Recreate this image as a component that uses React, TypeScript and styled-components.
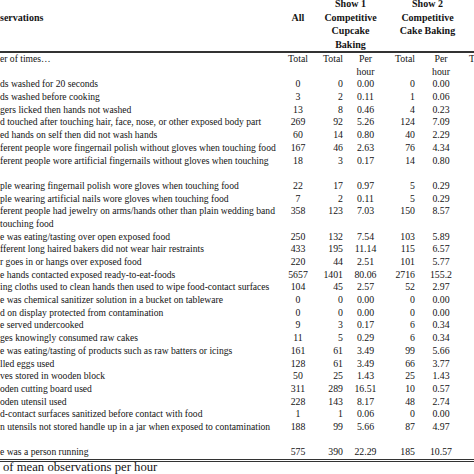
import React from "react";
import styled, { createGlobalStyle } from "styled-components";

const Global = createGlobalStyle`
  html, body { margin: 0; padding: 0; background: #ffffff; }
  body { width: 474px; height: 474px; overflow: hidden; }
`;

const COLS = "283px 30px 30px 45px 27px 52px 7px";
const HEAD_LH = 13.5;
const ROW_H = 12.7;

const Page = styled.div`
  width: 474px;
  height: 474px;
  overflow: hidden;
  font-family: "Liberation Serif", "Times New Roman", serif;
  color: #141414;
  background: #fff;
`;

const Table = styled.div`
  margin-top: -3px;
`;

const Head = styled.div`
  display: grid;
  grid-template-columns: ${COLS};
  height: ${HEAD_LH * 4}px;
  border-bottom: 2px solid #333;
  font-weight: bold;
  font-size: 10px;
  line-height: ${HEAD_LH}px;
`;

const HeadCell = styled.div<{ $skip?: number; $span?: number; $align?: string }>`
  padding-top: ${(p) => (p.$skip ?? 0) * HEAD_LH}px;
  grid-column: span ${(p) => p.$span ?? 1};
  text-align: ${(p) => p.$align ?? "center"};
  white-space: nowrap;
`;

const Body = styled.div`
  border-bottom: 3px double #333;
  font-size: 9.8px;
`;

const Row = styled.div`
  display: grid;
  grid-template-columns: ${COLS};
  height: ${ROW_H}px;
  line-height: ${ROW_H}px;
`;

const Desc = styled.div`
  white-space: nowrap;
  overflow: visible;
  font-size: 9.6px;
`;

const Num = styled.div<{ $align: "left" | "right" | "center"; $pad?: number }>`
  text-align: ${(p) => p.$align};
  padding-left: ${(p) => p.$pad ?? 0}px;
  white-space: nowrap;
`;

const Caption = styled.div`
  font-size: 12.7px;
  line-height: 12px;
  margin-top: -1px;
  padding-left: 3px;
  white-space: nowrap;
`;

type R = [string, string?, string?, string?, string?, string?];

const rows: R[] = [
  ["ds washed for 20 seconds", "0", "0", "0.00", "0", "0.00"],
  ["ds washed before cooking", "3", "2", "0.11", "1", "0.06"],
  ["gers licked then hands not washed", "13", "8", "0.46", "4", "0.23"],
  ["d touched after touching hair, face, nose, or other exposed body part", "269", "92", "5.26", "124", "7.09"],
  ["ed hands on self then did not wash hands", "60", "14", "0.80", "40", "2.29"],
  ["ferent people wore fingernail polish without gloves when touching food", "167", "46", "2.63", "76", "4.34"],
  ["ferent people wore artificial fingernails without gloves when touching", "18", "3", "0.17", "14", "0.80"],
  [""],
  ["ple wearing fingernail polish wore gloves when touching food", "22", "17", "0.97", "5", "0.29"],
  ["ple wearing artificial nails wore gloves when touching food", "7", "2", "0.11", "5", "0.29"],
  ["ferent people had jewelry on arms/hands other than plain wedding band", "358", "123", "7.03", "150", "8.57"],
  ["touching food"],
  ["e was eating/tasting over open exposed food", "250", "132", "7.54", "103", "5.89"],
  ["fferent long haired bakers did not wear hair restraints", "433", "195", "11.14", "115", "6.57"],
  ["r goes in or hangs over exposed food", "220", "44", "2.51", "101", "5.77"],
  ["e hands contacted exposed ready-to-eat-foods", "5657", "1401", "80.06", "2716", "155.2"],
  [" ing cloths used to clean hands then used to wipe food-contact surfaces", "104", "45", "2.57", "52", "2.97"],
  ["e was chemical sanitizer solution in a bucket on tableware", "0", "0", "0.00", "0", "0.00"],
  ["d on display protected from contamination", "0", "0", "0.00", "0", "0.00"],
  ["e served undercooked", "9", "3", "0.17", "6", "0.34"],
  ["ges knowingly consumed raw cakes", "11", "5", "0.29", "6", "0.34"],
  ["e was eating/tasting of products such as raw batters or icings", "161", "61", "3.49", "99", "5.66"],
  ["lled eggs used", "128", "61", "3.49", "66", "3.77"],
  ["ves stored in wooden block", "50", "25", "1.43", "25", "1.43"],
  ["oden cutting board used", "311", "289", "16.51", "10", "0.57"],
  ["oden utensil used", "228", "143", "8.17", "48", "2.74"],
  ["d-contact surfaces sanitized before contact with food", "1", "1", "0.06", "0", "0.00"],
  ["n utensils not stored handle up in a jar when exposed to contamination", "188", "99", "5.66", "87", "4.97"],
  [""],
  ["e was a person running", "575", "390", "22.29", "185", "10.57"],
];

const DataRow: React.FC<{ r: R }> = ({ r }) => (
  <Row>
    <Desc>{r[0]}</Desc>
    <Num $align="center">{r[1] ?? ""}</Num>
    <Num $align="right">{r[2] ?? ""}</Num>
    <Num $align="center">{r[3] ?? ""}</Num>
    <Num $align="right">{r[4] ?? ""}</Num>
    <Num $align="center">{r[5] ?? ""}</Num>
    <Num $align="left" />
  </Row>
);

export default function App() {
  return (
    <Page>
      <Global />
      <Table>
        <Head>
          <HeadCell $skip={1} $align="left">servations</HeadCell>
          <HeadCell $skip={1}>All</HeadCell>
          <HeadCell $span={2}>
            Show 1
            <br />
            Competitive
            <br />
            Cupcake
            <br />
            Baking
          </HeadCell>
          <HeadCell $span={2}>
            Show 2
            <br />
            Competitive
            <br />
            Cake Baking
          </HeadCell>
          <HeadCell />
        </Head>
        <Body>
          <Row>
            <Desc>er of times…</Desc>
            <Num $align="center">Total</Num>
            <Num $align="right">Total</Num>
            <Num $align="center">Per</Num>
            <Num $align="right">Total</Num>
            <Num $align="center">Per</Num>
            <Num $align="left" $pad={2}>T</Num>
          </Row>
          <Row>
            <Desc />
            <Num $align="center" />
            <Num $align="right" />
            <Num $align="center">hour</Num>
            <Num $align="right" />
            <Num $align="center">hour</Num>
            <Num $align="left" />
          </Row>
          {rows.map((r, i) => (
            <DataRow key={i} r={r} />
          ))}
        </Body>
        <Caption>of mean observations per hour</Caption>
      </Table>
    </Page>
  );
}
